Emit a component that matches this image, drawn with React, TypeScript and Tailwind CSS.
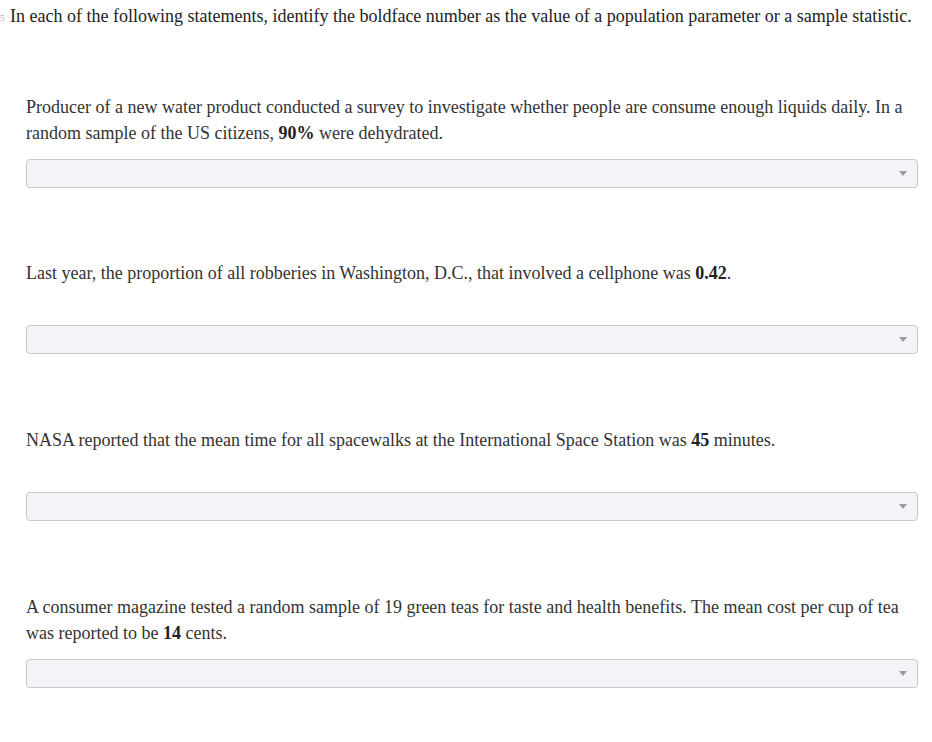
const items: { before: string; bold: string; after: string; gap: string }[] = [
  {
    before:
      'Producer of a new water product conducted a survey to investigate whether people are consume enough liquids daily. In a random sample of the US citizens, ',
    bold: '90%',
    after: ' were dehydrated.',
    gap: 'mb-[72px]',
  },
  {
    before: 'Last year, the proportion of all robberies in Washington, D.C., that involved a cellphone was ',
    bold: '0.42',
    after: '.',
    gap: 'mb-[73px]',
  },
  {
    before: 'NASA reported that the mean time for all spacewalks at the International Space Station was ',
    bold: '45',
    after: ' minutes.',
    gap: 'mb-[73px]',
  },
  {
    before:
      'A consumer magazine tested a random sample of 19 green teas for taste and health benefits. The mean cost per cup of tea was reported to be ',
    bold: '14',
    after: ' cents.',
    gap: 'mb-0',
  },
]

function Dropdown() {
  return (
    <div className="h-[29px] w-full rounded-[4px] border border-[#c9c9cc] bg-[#f3f4f8] flex items-center justify-end pr-[10px]">
      <svg width="8" height="5" viewBox="0 0 8 5">
        <path d="M0 0 L8 0 L4 5 Z" fill="#9a9a9a" />
      </svg>
    </div>
  )
}

export default function App() {
  return (
    <div
      className="w-[932px] h-[742px] bg-white text-[#333] text-[18px] leading-[26px] relative overflow-hidden"
      style={{ fontFamily: '"Liberation Serif", "Times New Roman", serif' }}
    >
      <span className="absolute left-0 top-[14px] text-[9px] leading-[9px] text-[#aaa]">5</span>

      {/* question prompt */}
      <div className="pt-[3px] pl-[10px] text-[#222] whitespace-nowrap">
        In each of the following statements, identify the boldface number as the value of a population parameter or a
        sample statistic.
      </div>

      <div className="mt-[65px] pl-[26px] pr-[14px]">
        {items.map((it, i) => (
          <div key={i} className={it.gap}>
            <div className="h-[65px] pr-[10px]">
              {it.before}
              <b className="font-bold text-[#222]">{it.bold}</b>
              {it.after}
            </div>
            <Dropdown />
          </div>
        ))}
      </div>
    </div>
  )
}
